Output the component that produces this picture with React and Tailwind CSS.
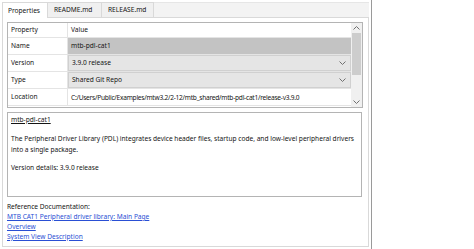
import React from 'react';

const Chevron = ({ up }) => (
  <svg width="7" height="4" viewBox="0 0 7 4" className="text-[#707070]">
    <path d={up ? 'M0.5 3.5L3.5 0.5L6.5 3.5' : 'M0.5 0.5L3.5 3.5L6.5 0.5'} fill="none" stroke="currentColor" strokeWidth="1" />
  </svg>
);

const rows = [
  { name: 'Name', value: 'mtb-pdl-cat1', kind: 'readonly' },
  { name: 'Version', value: '3.9.0 release', kind: 'combo' },
  { name: 'Type', value: 'Shared Git Repo', kind: 'combo' },
  { name: 'Location', value: 'C:/Users/Public/Examples/mtw3.2/2-12/mtb_shared/mtb-pdl-cat1/release-v3.9.0', kind: 'text' },
];

const App = () => {
  return (
    <div className="w-[474px] h-[249px] bg-white text-[6.6px] text-[#141414] overflow-hidden" style={{ fontFamily: '"Noto Sans", "Open Sans", sans-serif' }}>
      <div className="w-[372px] h-[249px] pl-[2px] pt-[2px] flex flex-col border-r border-[#9a9a9a]">
        {/* Tabs */}
        <div className="flex h-[15px] w-[367px]">
          <div className="w-[46px] h-[16px] pl-[5px] flex items-center bg-white border border-b-0 border-[#d9d9d9] relative z-10">Properties</div>
          <div className="w-[54px] h-[15px] pl-[6px] flex items-center bg-[#f0f0f0] border-t border-r border-[#d9d9d9]">README.md</div>
          <div className="w-[52px] h-[15px] pl-[6px] flex items-center bg-[#f0f0f0] border-t border-r border-[#d9d9d9]">RELEASE.md</div>
          <div className="flex-1 h-[15px] bg-[#f3f3f3] border-t border-[#e6e6e6]" />
        </div>
        {/* Panel */}
        <div className="w-[367px] h-[230px] border border-[#d9d9d9] bg-white pl-[4px] pt-[4px] flex flex-col">
          {/* Table */}
          <div className="w-[356px] h-[86px] border border-[#b4b4b4] flex">
            <div className="flex-1 min-w-0 flex flex-col">
              <div className="h-[15px] flex border-b border-[#e4e4e4]">
                <div className="w-[60px] pl-[3px] flex items-center border-r border-[#e4e4e4]">Property</div>
                <div className="flex-1 pl-[3px] flex items-center">Value</div>
              </div>
              {rows.map((r) => (
                <div key={r.name} className="h-[17px] flex border-b border-[#e4e4e4]">
                  <div className="w-[60px] pl-[3px] flex items-center border-r border-[#e4e4e4]">{r.name}</div>
                  {r.kind === 'readonly' && (
                    <div className="flex-1 pl-[3px] flex items-center bg-[#c3c3c3]">{r.value}</div>
                  )}
                  {r.kind === 'combo' && (
                    <div className="flex-1 pl-[3px] pr-[4px] flex items-center justify-between bg-[#e5e5e5] border border-[#d0d0d0]">
                      <span>{r.value}</span>
                      <Chevron />
                    </div>
                  )}
                  {r.kind === 'text' && (
                    <div className="flex-1 min-w-0 pl-[3px] pt-[2px] flex items-center whitespace-nowrap overflow-hidden tracking-[-0.25px]">{r.value}</div>
                  )}
                </div>
              ))}
            </div>
            {/* Scrollbar */}
            <div className="w-[11px] bg-[#f0f0f0] flex flex-col items-center">
              <div className="h-[10px] flex items-center justify-center"><Chevron up /></div>
              <div className="w-[9px] h-[42px] bg-[#cdcdcd]" />
              <div className="flex-1" />
              <div className="h-[10px] flex items-center justify-center"><Chevron /></div>
            </div>
          </div>
          {/* Description */}
          <div className="w-[355px] h-[85px] mt-[4px] border border-[#b4b4b4] px-[3px] pt-[1px] leading-[11px] overflow-hidden">
            <div className="underline">mtb-pdl-cat1</div>
            <div className="mt-[8px] whitespace-nowrap">
              The Peripheral Driver Library (PDL) integrates device header files, startup code, and low-level peripheral drivers
              <br />
              into a single package.
            </div>
            <div className="mt-[7px]">Version details: 3.9.0 release</div>
          </div>
          {/* Reference docs */}
          <div className="mt-[5px] leading-[10px] flex flex-col items-start">
            <div>Reference Documentation:</div>
            <a className="text-[#2a4fd4] underline">MTB CAT1 Peripheral driver library: Main Page</a>
            <a className="text-[#2a4fd4] underline">Overview</a>
            <a className="text-[#2a4fd4] underline">System View Description</a>
          </div>
        </div>
      </div>
    </div>
  );
};

export default App;
